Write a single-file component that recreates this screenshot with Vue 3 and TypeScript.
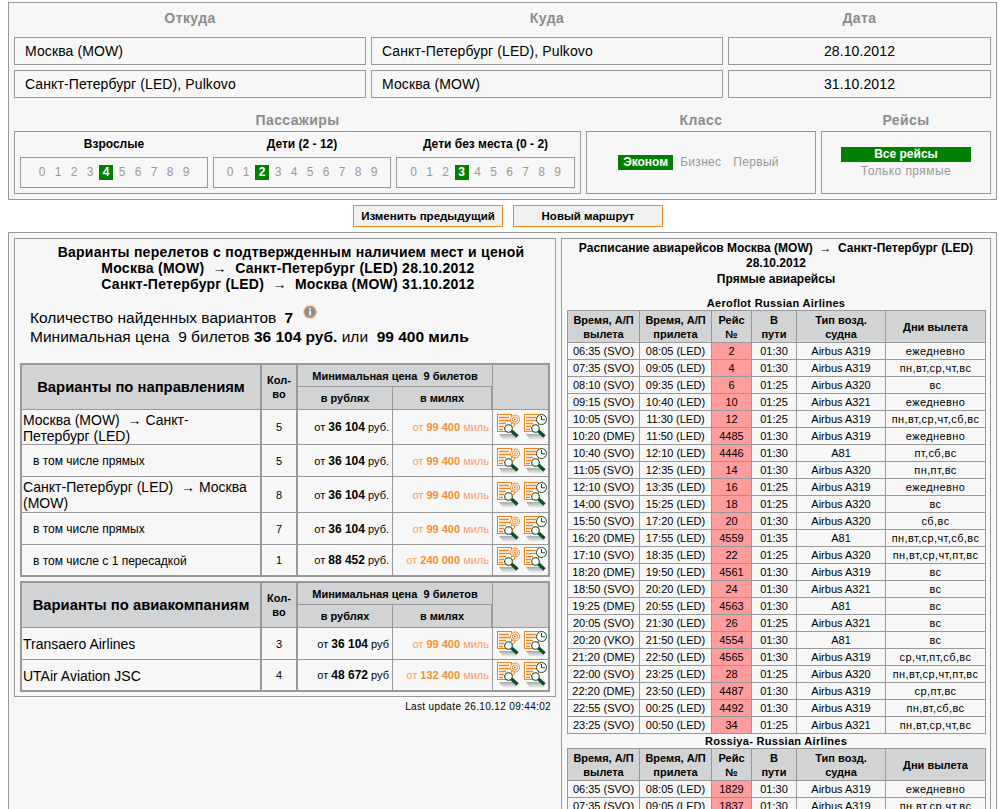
<script setup lang="ts">
type Price = { label: string; sub?: boolean; count: number; rub: string; miles: string; h: number }
type Flight = [string, string, string, string, string, string]

const digits = [0, 1, 2, 3, 4, 5, 6, 7, 8, 9]

const route = [
  { from: 'Москва (MOW)', to: 'Санкт-Петербург (LED), Pulkovo', date: '28.10.2012' },
  { from: 'Санкт-Петербург (LED), Pulkovo', to: 'Москва (MOW)', date: '31.10.2012' },
]

const passengers = [
  { label: 'Взрослые', active: 4 },
  { label: 'Дети (2 - 12)', active: 2 },
  { label: 'Дети без места (0 - 2)', active: 3 },
]

const byDirection: Price[] = [
  { label: 'Москва (MOW) \u00a0→ Санкт-Петербург (LED)', count: 5, rub: '36 104', miles: '99 400', h: 35 },
  { label: 'в том числе прямых', sub: true, count: 5, rub: '36 104', miles: '99 400', h: 32 },
  { label: 'Санкт-Петербург (LED) \u00a0→ Москва (MOW)', count: 8, rub: '36 104', miles: '99 400', h: 36 },
  { label: 'в том числе прямых', sub: true, count: 7, rub: '36 104', miles: '99 400', h: 32 },
  { label: 'в том числе с 1 пересадкой', sub: true, count: 1, rub: '88 452', miles: '240 000', h: 32 },
]

const byAirline: Price[] = [
  { label: 'Transaero Airlines', count: 3, rub: '36 104', miles: '99 400', h: 32 },
  { label: 'UTAir Aviation JSC', count: 4, rub: '48 672', miles: '132 400', h: 32 },
]

const priceTables = [
  { title: 'Варианты по направлениям', rows: byDirection, unit: 'руб.' },
  { title: 'Варианты по авиакомпаниям', rows: byAirline, unit: 'руб' },
]

const aeroflot: Flight[] = [
  ['06:35 (SVO)', '08:05 (LED)', '2', '01:30', 'Airbus A319', 'ежедневно'],
  ['07:35 (SVO)', '09:05 (LED)', '4', '01:30', 'Airbus A319', 'пн,вт,ср,чт,вс'],
  ['08:10 (SVO)', '09:35 (LED)', '6', '01:25', 'Airbus A320', 'вс'],
  ['09:15 (SVO)', '10:40 (LED)', '10', '01:25', 'Airbus A321', 'ежедневно'],
  ['10:05 (SVO)', '11:30 (LED)', '12', '01:25', 'Airbus A319', 'пн,вт,ср,чт,сб,вс'],
  ['10:20 (DME)', '11:50 (LED)', '4485', '01:30', 'Airbus A319', 'ежедневно'],
  ['10:40 (SVO)', '12:10 (LED)', '4446', '01:30', 'A81', 'пт,сб,вс'],
  ['11:05 (SVO)', '12:35 (LED)', '14', '01:30', 'Airbus A320', 'пн,пт,вс'],
  ['12:10 (SVO)', '13:35 (LED)', '16', '01:25', 'Airbus A319', 'ежедневно'],
  ['14:00 (SVO)', '15:25 (LED)', '18', '01:25', 'Airbus A320', 'вс'],
  ['15:50 (SVO)', '17:20 (LED)', '20', '01:30', 'Airbus A320', 'сб,вс'],
  ['16:20 (DME)', '17:55 (LED)', '4559', '01:35', 'A81', 'пн,вт,ср,чт,сб,вс'],
  ['17:10 (SVO)', '18:35 (LED)', '22', '01:25', 'Airbus A320', 'пн,вт,ср,чт,пт,вс'],
  ['18:20 (DME)', '19:50 (LED)', '4561', '01:30', 'Airbus A319', 'вс'],
  ['18:50 (SVO)', '20:20 (LED)', '24', '01:30', 'Airbus A321', 'вс'],
  ['19:25 (DME)', '20:55 (LED)', '4563', '01:30', 'A81', 'вс'],
  ['20:05 (SVO)', '21:30 (LED)', '26', '01:25', 'Airbus A321', 'вс'],
  ['20:20 (VKO)', '21:50 (LED)', '4554', '01:30', 'A81', 'вс'],
  ['21:20 (DME)', '22:50 (LED)', '4565', '01:30', 'Airbus A319', 'ср,чт,пт,сб,вс'],
  ['22:00 (SVO)', '23:25 (LED)', '28', '01:25', 'Airbus A320', 'пн,вт,ср,чт,пт,вс'],
  ['22:20 (DME)', '23:50 (LED)', '4487', '01:30', 'Airbus A319', 'ср,пт,вс'],
  ['22:55 (SVO)', '00:25 (LED)', '4492', '01:30', 'Airbus A319', 'пн,вт,сб,вс'],
  ['23:25 (SVO)', '00:50 (LED)', '34', '01:25', 'Airbus A321', 'пн,вт,ср,чт,вс'],
]

const rossiya: Flight[] = [
  ['06:35 (SVO)', '08:05 (LED)', '1829', '01:30', 'Airbus A319', 'ежедневно'],
  ['07:35 (SVO)', '09:05 (LED)', '1837', '01:30', 'Airbus A319', 'пн,вт,ср,чт,вс'],
]

const airlines = [
  { name: 'Aeroflot Russian Airlines', flights: aeroflot },
  { name: 'Rossiya- Russian Airlines', flights: rossiya },
]
</script>

<template>
  <div class="page">
    <svg class="defs" width="0" height="0" aria-hidden="true">
      <defs>
        <linearGradient id="shade" x1="0" y1="0" x2="0" y2="1">
          <stop offset="0" stop-color="#a5a5a5" />
          <stop offset="1" stop-color="#f7f7f7" />
        </linearGradient>
        <symbol id="doc" viewBox="0 0 23 26">
          <path d="M2 20 H16 L21 26 H6 Z" fill="url(#shade)" />
          <rect x="0.5" y="0.5" width="14" height="17" fill="#fff" stroke="#f58220" />
          <path d="M2 3.5H12M2 6.5H13M2 9.5H9M2 12.5H7M2 15.5H6" stroke="#f58220" stroke-width="1.5" />
          <path d="M14.5 17 L20.5 22.5" stroke="#0b4f28" stroke-width="3.4" />
          <circle cx="11.5" cy="14.5" r="3.8" fill="#fff" stroke="#0b4f28" stroke-width="1.1" />
        </symbol>
        <symbol id="doc-rings" viewBox="0 0 23 26">
          <use href="#doc" />
          <circle cx="18" cy="5.5" r="4.5" fill="#fff" stroke="#f58220" />
          <circle cx="18" cy="5.5" r="2.6" fill="none" stroke="#f58220" />
          <circle cx="18" cy="5.5" r="1" fill="#f58220" />
          <circle cx="16" cy="10.8" r="1.8" fill="#fff" stroke="#f58220" />
        </symbol>
        <symbol id="doc-clock" viewBox="0 0 23 26">
          <use href="#doc" />
          <circle cx="17.5" cy="5.5" r="5" fill="#fff" stroke="#0b4f28" />
          <path d="M17.5 2V5.8H21" fill="none" stroke="#0b4f28" />
        </symbol>
      </defs>
    </svg>

    <section class="panel search">
      <div class="route">
        <h3>Откуда</h3>
        <h3>Куда</h3>
        <h3>Дата</h3>
        <template v-for="leg in route" :key="leg.date">
          <div class="field">{{ leg.from }}</div>
          <div class="field">{{ leg.to }}</div>
          <div class="field date">{{ leg.date }}</div>
        </template>
      </div>
      <div class="options">
        <h3>Пассажиры</h3>
        <h3>Класс</h3>
        <h3>Рейсы</h3>
        <div class="box pax">
          <div v-for="p in passengers" :key="p.label" class="pax-group">
            <div class="pax-label">{{ p.label }}</div>
            <div class="digits">
              <span v-for="d in digits" :key="d" class="digit" :class="{ on: d === p.active }">{{ d }}</span>
            </div>
          </div>
        </div>
        <div class="box cabin">
          <span class="pick on">Эконом</span>
          <span class="pick">Бизнес</span>
          <span class="pick">Первый</span>
        </div>
        <div class="box kinds">
          <div class="kind on">Все рейсы</div>
          <div class="kind">Только прямые</div>
        </div>
      </div>
    </section>

    <div class="actions">
      <button type="button">Изменить предыдущий</button>
      <button type="button">Новый маршрут</button>
    </div>

    <section class="panel results">
      <div class="left-col">
        <div class="box offers">
          <h2>
            <div class="lead">Варианты перелетов с подтвержденным наличием мест и ценой</div>
            <div>Москва (MOW) &nbsp;→&nbsp; Санкт-Петербург (LED) 28.10.2012</div>
            <div>Санкт-Петербург (LED) &nbsp;→&nbsp; Москва (MOW) 31.10.2012</div>
          </h2>
          <div class="summary">
            <div class="summary-line">
              Количество найденных вариантов <b class="total">7</b>
              <svg class="info" width="14" height="14" viewBox="0 0 14 14">
                <circle cx="7" cy="7" r="6" fill="#8f8f8f" stroke="#f5a05a" stroke-width="1.6" stroke-dasharray="1.5 0.7" />
                <rect x="6.2" y="5.8" width="1.7" height="4.8" fill="#fff" />
                <rect x="6.2" y="3.2" width="1.7" height="1.6" fill="#fff" />
              </svg>
            </div>
            <div class="summary-line second">Минимальная цена &nbsp;9 билетов <b>36 104 руб.</b> или &nbsp;<b>99 400 миль</b></div>
          </div>

          <table v-for="t in priceTables" :key="t.title" class="prices">
            <colgroup>
              <col style="width: 240px" />
              <col style="width: 36px" />
              <col style="width: 95px" />
              <col style="width: 100px" />
              <col style="width: 57px" />
            </colgroup>
            <thead>
              <tr class="head-a">
                <th rowspan="2" class="title thick">{{ t.title }}</th>
                <th rowspan="2" class="thick">Кол-<br />во</th>
                <th colspan="2">Минимальная цена &nbsp;9 билетов</th>
                <th rowspan="2"></th>
              </tr>
              <tr class="head-b">
                <th>в рублях</th>
                <th>в милях</th>
              </tr>
            </thead>
            <tbody>
              <tr v-for="(r, i) in t.rows" :key="i" :style="{ height: r.h + 'px' }">
                <td class="name thick" :class="{ sub: r.sub }">{{ r.label }}</td>
                <td class="count thick">{{ r.count }}</td>
                <td class="money">от <b>{{ r.rub }}</b> {{ t.unit }}</td>
                <td class="money miles">от <b>{{ r.miles }}</b> миль</td>
                <td class="icons">
                  <svg width="23" height="26"><use href="#doc-rings" /></svg>
                  <svg width="23" height="26"><use href="#doc-clock" /></svg>
                </td>
              </tr>
            </tbody>
          </table>
        </div>
        <div class="updated">Last update 26.10.12 09:44:02</div>
      </div>

      <div class="box schedule">
        <h4>
          Расписание авиарейсов Москва (MOW) &nbsp;→&nbsp; Санкт-Петербург (LED)<br />
          28.10.2012<br />
          Прямые авиарейсы
        </h4>
        <div v-for="a in airlines" :key="a.name" class="airline">
          <div class="airline-name">{{ a.name }}</div>
          <table class="flights">
            <colgroup>
              <col style="width: 72px" />
              <col style="width: 72px" />
              <col style="width: 40px" />
              <col style="width: 45px" />
              <col style="width: 89px" />
              <col style="width: 100px" />
            </colgroup>
            <thead>
              <tr>
                <th>Время, А/П<br />вылета</th>
                <th>Время, А/П<br />прилета</th>
                <th>Рейс<br />№</th>
                <th>В<br />пути</th>
                <th>Тип возд.<br />судна</th>
                <th>Дни вылета</th>
              </tr>
            </thead>
            <tbody>
              <tr v-for="f in a.flights" :key="f[0]">
                <td v-for="(v, i) in f" :key="i" :class="{ flight: i === 2, days: i === 5 }">{{ v }}</td>
              </tr>
            </tbody>
          </table>
        </div>
      </div>
    </section>
  </div>
</template>

<style>
html,
body {
  margin: 0;
  background: #fff;
  overflow: hidden;
}
</style>

<style scoped>
.page {
  height: 809px;
  overflow: hidden;
  font-family: "Liberation Sans", Arial, sans-serif;
  color: #000;
  padding-top: 2px;
  box-sizing: border-box;
}
.defs {
  position: absolute;
}
.panel {
  width: 989px;
  margin-left: 8px;
  box-sizing: border-box;
  border: 1px solid #999;
  background: #f7f7f7;
}
.box {
  border: 1px solid #999;
  box-sizing: border-box;
}
h3 {
  margin: 0;
  font-size: 14px;
  line-height: 26px;
  font-weight: bold;
  letter-spacing: 0.4px;
  color: #8c8c8c;
  text-align: center;
}

/* search form */
.search {
  height: 198px;
  padding: 2px 5px 5px;
}
.route {
  display: grid;
  grid-template-columns: 352px 352px 263px;
  grid-template-rows: 27px 28px 28px;
  gap: 5px;
}
.field {
  border: 1px solid #999;
  padding-left: 10px;
  font-size: 14px;
  line-height: 26px;
  letter-spacing: 0.1px;
}
.field.date {
  padding: 0;
  text-align: center;
}
.options {
  display: grid;
  grid-template-columns: 567px 230px 170px;
  grid-template-rows: 24px 63px;
  column-gap: 5px;
  row-gap: 0;
  margin-top: 9px;
}
.pax {
  display: grid;
  grid-template-columns: 188px 178px 179px;
  column-gap: 5px;
  padding: 0 5px;
}
.pax-label {
  height: 25px;
  line-height: 25px;
  font-size: 12px;
  font-weight: bold;
  text-align: center;
}
.digits {
  height: 31px;
  border: 1px solid #999;
  box-sizing: border-box;
  display: flex;
  justify-content: center;
  align-items: center;
}
.digit {
  width: 14px;
  height: 15px;
  margin: 0 1px;
  font-size: 12px;
  line-height: 15px;
  text-align: center;
  color: #999;
}
.digit.on {
  background: #008000;
  color: #fff;
  font-weight: bold;
}
.cabin {
  display: flex;
  justify-content: center;
  align-items: center;
  gap: 2px;
}
.pick {
  padding: 0 5px;
  font-size: 12px;
  line-height: 15px;
  letter-spacing: 0.3px;
  color: #999;
}
.pick.on {
  background: #008000;
  color: #fff;
  font-weight: bold;
  letter-spacing: 0;
}
.kinds {
  display: flex;
  flex-direction: column;
  align-items: center;
  justify-content: center;
  gap: 2px;
}
.kind {
  width: 130px;
  font-size: 12px;
  line-height: 15px;
  letter-spacing: 0.45px;
  text-align: center;
  color: #999;
}
.kind.on {
  background: #008000;
  color: #fff;
  font-weight: bold;
  letter-spacing: 0;
}

/* buttons */
.actions {
  display: flex;
  gap: 10px;
  padding: 5px 0 5px 353px;
}
.actions button {
  width: 150px;
  height: 22px;
  padding: 0;
  border: 1px solid #f58220;
  background: #f0f0f0;
  font: bold 11.5px "Liberation Sans", Arial, sans-serif;
  color: #000;
}

/* results */
.results {
  display: flex;
  gap: 5px;
  align-items: flex-start;
  padding: 5px;
  min-height: 700px;
}
.left-col {
  width: 542px;
}
.offers {
  height: 459px;
  padding: 0 5px;
}
.offers h2 {
  margin: 0;
  padding: 5px 0 0 6px;
  font-size: 14px;
  line-height: 16px;
  font-weight: bold;
  letter-spacing: 0.25px;
  text-align: center;
}
.lead {
  padding-left: 6px;
}
.summary {
  margin: 13px 0 0 10px;
  font-size: 15.5px;
  line-height: 20px;
  height: 45px;
  white-space: nowrap;
}
.summary-line {
  height: 20px;
}
.summary-line.second {
  margin-top: 2px;
}
.total {
  margin-left: 4px;
}
.info {
  vertical-align: 4px;
  margin-left: 10px;
}
.prices {
  table-layout: fixed;
  width: 530px;
  border-collapse: separate;
  border-spacing: 0;
  border-top: 2px solid #999;
  border-left: 2px solid #999;
  margin-top: 13px;
}
.prices + .prices {
  margin-top: 4px;
}
.prices th,
.prices td {
  padding: 0;
  border-right: 1px solid #999;
  border-bottom: 1px solid #999;
}
.prices th {
  background: #d1d3d4;
  font-size: 11px;
  font-weight: bold;
  line-height: 14px;
  text-align: center;
}
.prices .head-a {
  height: 22px;
}
.prices .head-b {
  height: 23px;
}
.prices .title {
  font-size: 14.8px;
}
.prices .thick {
  border-right-width: 2px;
}
.prices tr:last-child td {
  border-bottom-width: 2px;
}
.prices th:last-child,
.prices td:last-child {
  border-right-width: 2px;
}
.name {
  padding: 1px 6px 0 1px !important;
  font-size: 14px;
  line-height: 16px;
}
.name.sub {
  padding-left: 11px !important;
  font-size: 12px;
}
.count {
  font-size: 11px;
  text-align: center;
}
.money {
  padding-right: 3px !important;
  font-size: 11px;
  text-align: right;
  white-space: nowrap;
}
.money b {
  font-size: 12px;
}
.miles {
  color: #f9a25f;
}
.miles b {
  font-size: 11px;
  color: #f78f2e;
}
.icons {
  white-space: nowrap;
  font-size: 0;
  padding-left: 4px !important;
}
.icons svg {
  vertical-align: middle;
  margin-right: 4px;
}
.updated {
  margin-top: 3px;
  padding-right: 5px;
  font-size: 10px;
  line-height: 13px;
  letter-spacing: 0.35px;
  text-align: right;
}

/* schedule */
.schedule {
  width: 430px;
  padding: 0 5px;
}
.schedule h4 {
  margin: 0;
  padding-top: 2px;
  font-size: 12px;
  font-weight: bold;
  line-height: 15.4px;
  text-align: center;
  height: 55px;
}
.airline-name {
  font-size: 11px;
  font-weight: bold;
  line-height: 14px;
  letter-spacing: 0.3px;
  text-align: center;
}
.flights {
  table-layout: fixed;
  width: 419px;
  border-collapse: separate;
  border-spacing: 0;
  border-top: 1px solid #999;
  border-left: 1px solid #999;
}
.flights th,
.flights td {
  padding: 0;
  border-right: 1px solid #999;
  border-bottom: 1px solid #999;
  text-align: center;
  font-size: 11px;
}
.flights th {
  height: 31px;
  line-height: 14px;
  background: #d1d3d4;
  font-weight: bold;
}
.flights td {
  height: 16px;
  line-height: 14px;
  white-space: nowrap;
}
.flights .days {
  letter-spacing: 0.4px;
}
.flights .flight {
  background: #ff9c9c;
}
</style>
